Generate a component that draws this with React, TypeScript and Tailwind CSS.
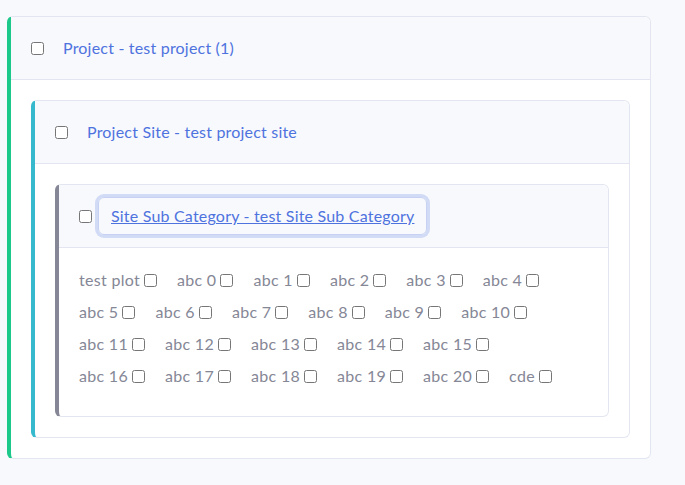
import type { ReactNode } from "react"

interface TreeCardProps {
  title: string
  accent: string
  focused?: boolean
  children: ReactNode
}

function TreeCard({ title, accent, focused, children }: TreeCardProps) {
  return (
    <div className={`rounded-[6px] border border-[#e3e6f0] border-l-4 bg-white ${accent}`}>
      <div className="flex items-center px-5 py-3 bg-[#f8f9fc] border-b border-[#e3e6f0] rounded-tr-[6px]">
        <input type="checkbox" className="w-[13px] h-[13px] shrink-0" />
        <button
          className={`ml-[6px] h-[38px] px-3 rounded-[6px] border text-[16px] leading-6 tracking-[0.2px] text-[#4e73df] ${
            focused
              ? "underline border-[#c6d1f3] shadow-[0_0_0_3px_rgba(78,115,223,0.22)]"
              : "border-transparent"
          }`}
        >
          {title}
        </button>
      </div>
      <div className="p-5">{children}</div>
    </div>
  )
}

const plots = [
  "test plot",
  ...Array.from({ length: 21 }, (_, i) => `abc ${i}`),
  "cde",
]

export default function App() {
  return (
    <div className="min-h-[485px] bg-[#f8f9fc] pt-4 pl-[7px] font-['Lato','Liberation_Sans',sans-serif]">
      <div className="w-[644px]">
        <TreeCard title="Project - test project (1)" accent="border-l-[#1cc88a]">
          <TreeCard title="Project Site - test project site" accent="border-l-[#36b9cc]">
            <TreeCard
              title="Site Sub Category - test Site Sub Category"
              accent="border-l-[#858796]"
              focused
            >
              <div className="flex flex-wrap">
                {plots.map((p) => (
                  <label
                    key={p}
                    className="flex items-center gap-[4px] mr-5 mb-2 h-6 text-[16px] tracking-[0.3px] text-[#858796]"
                  >
                    {p}
                    <input type="checkbox" className="w-[13px] h-[13px]" />
                  </label>
                ))}
              </div>
            </TreeCard>
          </TreeCard>
        </TreeCard>
      </div>
    </div>
  )
}
